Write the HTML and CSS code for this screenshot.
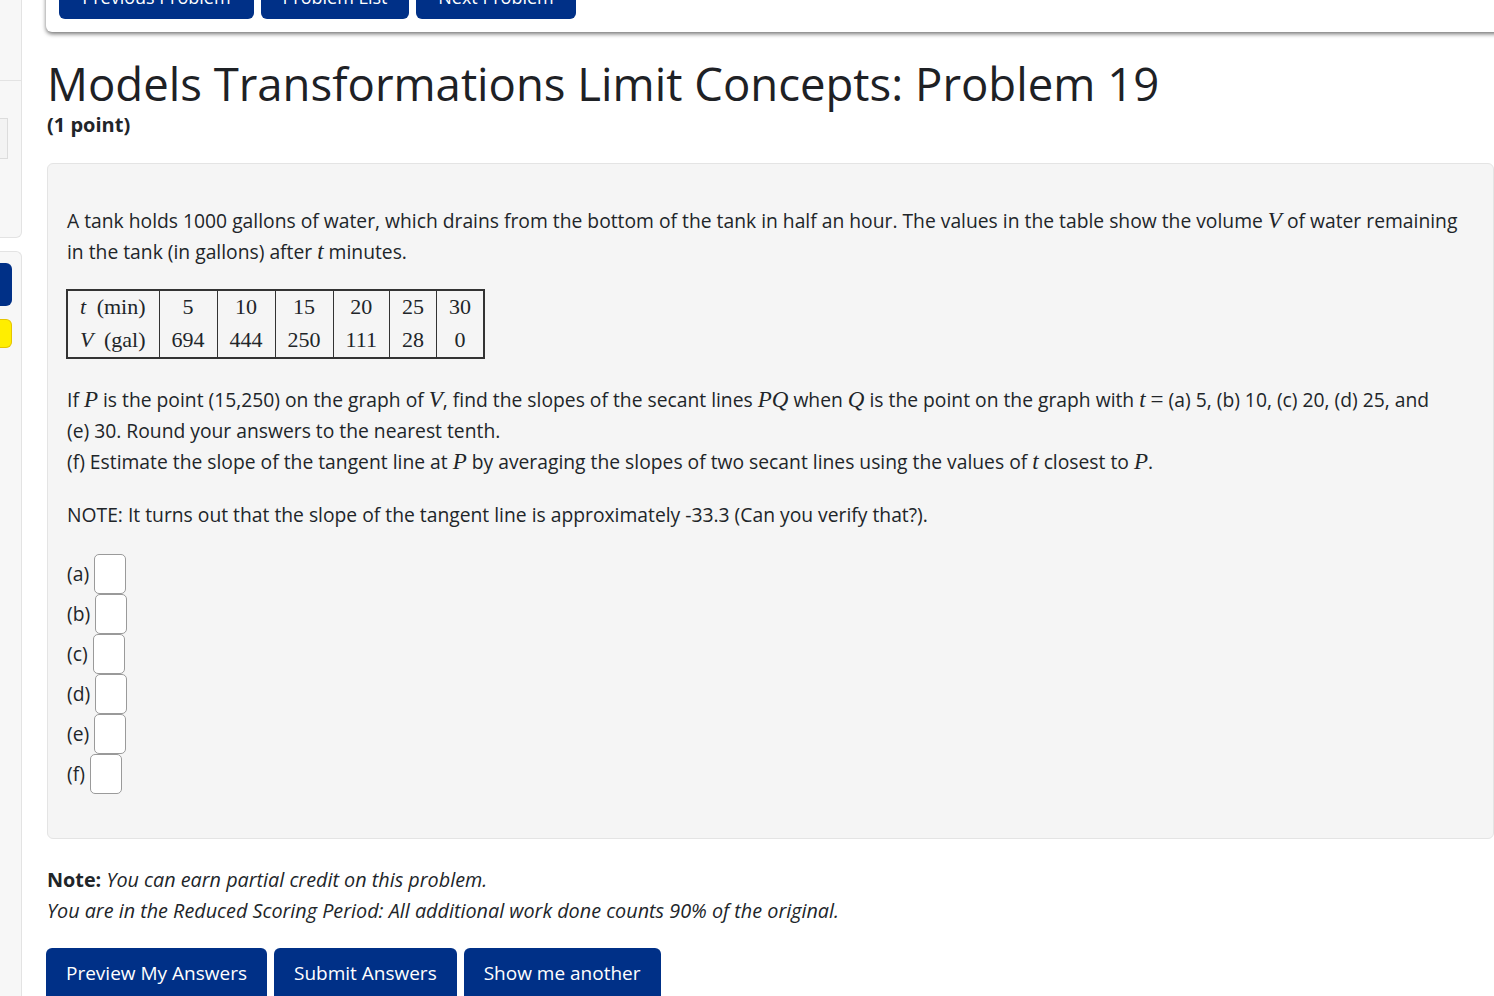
FILE: index.html
```html
<!DOCTYPE html>
<html lang="en">
<head>
<meta charset="UTF-8">
<title>Models Transformations Limit Concepts: Problem 19</title>
<link rel="stylesheet" href="styles.css">
</head>
<body>
<div class="page">
<aside class="sidebar">
<div class="side-panel side-top">
<div class="side-row"></div>
<div class="side-box"></div>
</div>
<div class="side-panel side-bottom">
<div class="side-btn blue"></div>
<div class="side-btn yellow"></div>
</div>
</aside>

<main class="main">
<div class="nav-card">
<button class="btn">Previous Problem</button>
<button class="btn">Problem List</button>
<button class="btn">Next Problem</button>
</div>

<h1 class="title">Models Transformations Limit Concepts: Problem 19</h1>
<div class="points">(1 point)</div>

<div class="problem">
<p>A tank holds 1000 gallons of water, which drains from the bottom of the tank in half an hour. The values in the table show the volume <span class="mi">V</span> of water remaining in the tank (in gallons) after <span class="mi">t</span> minutes.</p>

<table class="data">
<tr>
<td class="head"><span class="mi">t</span> (min)</td>
<td>5</td><td>10</td><td>15</td><td>20</td><td>25</td><td>30</td>
</tr>
<tr>
<td class="head"><span class="mi">V</span> (gal)</td>
<td>694</td><td>444</td><td>250</td><td>111</td><td>28</td><td>0</td>
</tr>
</table>

<p>If <span class="mi">P</span> is the point (15,250) on the graph of <span class="mi">V</span>, find the slopes of the secant lines <span class="mi">PQ</span> when <span class="mi">Q</span> is the point on the graph with <span class="mi">t</span><span class="mo">=</span>(a) 5, (b) 10, (c) 20, (d) 25, and (e)&nbsp;30. Round your answers to the nearest tenth.<br>
(f) Estimate the slope of the tangent line at <span class="mi">P</span> by averaging the slopes of two secant lines using the values of <span class="mi">t</span> closest to <span class="mi">P</span>.</p>

<p class="gap">NOTE: It turns out that the slope of the tangent line is approximately -33.3 (Can you verify that?).</p>

<div class="answers">
<div class="answer"><label>(a)</label> <input type="text" class="ans"></div>
<div class="answer"><label>(b)</label> <input type="text" class="ans"></div>
<div class="answer"><label>(c)</label> <input type="text" class="ans"></div>
<div class="answer"><label>(d)</label> <input type="text" class="ans"></div>
<div class="answer"><label>(e)</label> <input type="text" class="ans"></div>
<div class="answer"><label>(f)</label> <input type="text" class="ans"></div>
</div>
</div>

<div class="note">
<div><b>Note:</b> <i>You can earn partial credit on this problem.</i></div>
<div><i>You are in the Reduced Scoring Period: All additional work done counts 90% of the original.</i></div>
</div>

<div class="submit-row">
<button class="btn big">Preview My Answers</button>
<button class="btn big">Submit Answers</button>
<button class="btn big">Show me another</button>
</div>
</main>
</div>
</body>
</html>
```

FILE: styles.css
```css
body {
margin: 0;
font-family: "Open Sans", "Noto Sans", sans-serif;
color: #212529;
background: #fff;
overflow: hidden;
}
.page {
display: flex;
height: 996px;
}
.sidebar {
width: 22px;
flex: none;
background: #fff;
display: flex;
flex-direction: column;
gap: 13px;
}
.side-panel {
background: #f7f7f7;
border: 1px solid #e3e3e3;
border-left: none;
}
.side-top {
height: 237px;
margin-top: -1px;
border-radius: 0 0 6px 0;
}
.side-row {
height: 80px;
border-bottom: 1px solid #e3e3e3;
}
.side-box {
width: 7px;
height: 39px;
margin-top: 37px;
background: #f3f3f3;
border: 1px solid #dcdcdc;
border-left: none;
}
.side-bottom {
flex: 1;
border-radius: 0 6px 0 0;
border-bottom: none;
padding-top: 11px;
}
.side-btn {
width: 12px;
border-radius: 0 6px 6px 0;
}
.blue {
height: 43px;
background: #003087;
}
.yellow {
height: 27px;
margin-top: 13px;
background: #ffee00;
border: 1px solid #e5c400;
border-left: none;
width: 11px;
}
.main {
flex: 1;
padding-left: 25px;
min-width: 0;
}
.nav-card {
margin-top: -38px;
margin-right: -10px;
margin-left: -1px;
background: #fff;
border-radius: 6px;
box-shadow: 0 2px 4px rgba(0, 0, 0, 0.55);
padding: 13px 12px 13px 13px;
display: flex;
gap: 7px;
}
.btn {
font-family: "Open Sans", "Noto Sans", sans-serif;
background: #003087;
color: #fff;
border: none;
border-radius: 6px;
font-size: 18px;
padding: 9px 20px;
height: 44px;
cursor: pointer;
}
.nav-card .btn:nth-child(1) { width: 195px; }
.nav-card .btn:nth-child(2) { width: 148px; }
.nav-card .btn:nth-child(3) { width: 160px; }
.title {
font-size: 45.5px;
font-weight: 500;
line-height: 1.2;
margin: 24px 0 0;
color: #1e2125;
}
.points {
font-size: 20px;
font-weight: 700;
line-height: 27px;
}
.problem {
margin-top: 25px;
background: #f5f5f5;
border: 1px solid #e4e4e4;
border-radius: 6px;
padding: 41px 15px 44px 19px;
font-size: 19.3px;
line-height: 31px;
}
.problem p {
margin: 0;
}
.problem p.gap {
margin-top: 22px;
}
.mi {
font-family: "Liberation Serif", "DejaVu Serif", serif;
font-style: italic;
font-size: 23px;
}
.mo {
font-family: "Liberation Serif", "DejaVu Serif", serif;
font-size: 23px;
margin: 0 5px;
}
.data {
border-collapse: collapse;
border: 2px solid #333;
margin: 22px 0 25px -1px;
font-family: "Liberation Serif", "DejaVu Serif", serif;
font-size: 22px;
line-height: 32px;
}
.data td {
border-left: 1.5px solid #333;
padding: 0 12px 1px;
text-align: center;
}
.data td.head {
border-left: none;
padding: 0 13px 1px 12px;
}
.data .mi {
font-size: 22px;
margin-right: 5px;
}
.answers {
margin-top: 24px;
}
.answer {
height: 40px;
display: flex;
align-items: center;
gap: 5px;
}
.ans {
width: 32px;
height: 40px;
box-sizing: border-box;
border: 1px solid #9a9a9a;
border-radius: 5px;
background: #fff;
padding: 0;
}
.note {
margin-top: 25px;
font-size: 19.8px;
line-height: 31px;
}
.submit-row {
margin-top: 22px;
margin-left: -1px;
display: flex;
gap: 7px;
}
.btn.big {
font-size: 19px;
height: 54px;
padding: 10px 20px 14px;
}
```
